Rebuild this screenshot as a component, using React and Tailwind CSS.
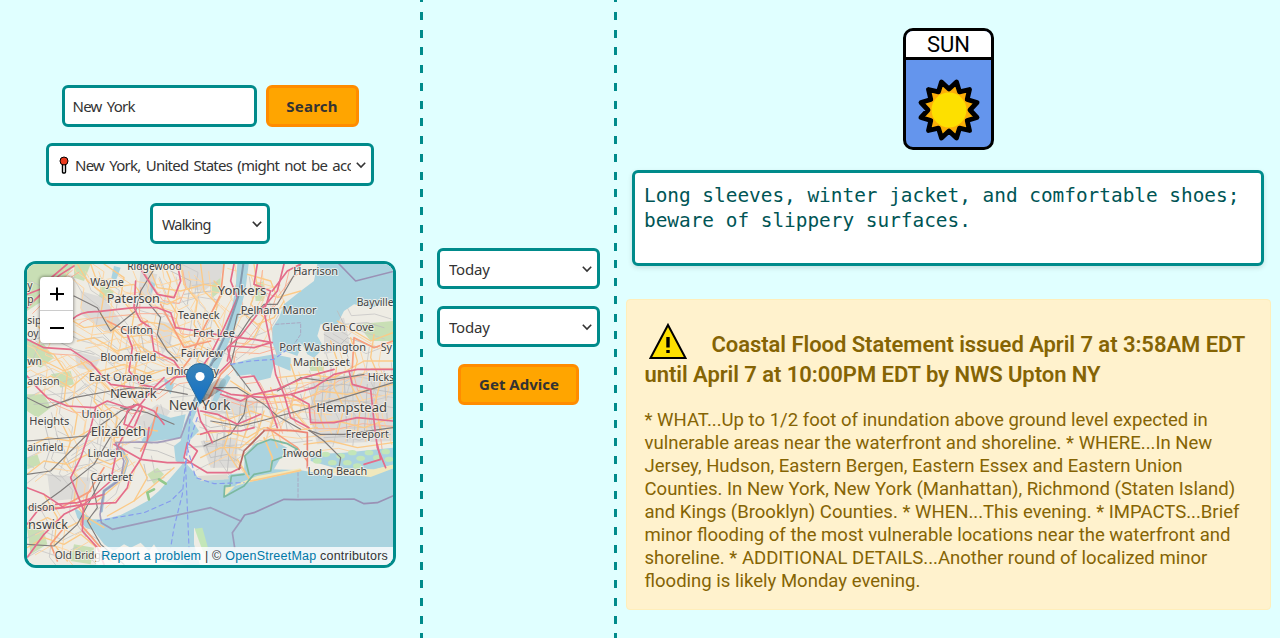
import React, { useState } from 'react';
import { clsx } from 'clsx';

const minorRoads = [
  'M9 320 L60 300 L120 330 L190 300 L230 330 L300 310 L380 340 L440 320 L520 350',
  'M9 380 L80 345 L140 380 L200 330 L260 390 L330 350 L390 330',
  'M160 9 L190 60 L240 100 L230 160 L270 200 L260 260 L310 300 L300 380 L340 430',
  'M200 9 L215 50 L260 80 L330 70 L360 110 L430 130 L470 110',
  'M240 9 L300 50 L290 110 L330 160 L320 220 L350 270 L330 330 L360 400',
  'M9 170 L60 210 L40 260 L90 280 L130 340 L120 420 L160 460 L150 520',
  'M130 170 L180 200 L250 190 L300 230 L370 220 L430 260 L500 240 L560 270',
  'M160 240 L210 230 L280 270 L340 250 L400 290 L470 290',
  'M170 300 L220 360 L210 420 L250 470 L240 540',
  'M420 9 L440 60 L430 110 L460 160 L450 210 L490 270',
  'M470 9 L480 70 L520 120 L510 190 L540 240 L520 300 L560 330',
  'M530 9 L540 90 L580 130 L570 180',
  'M570 60 L600 90 L560 160 L590 210',
  'M380 30 L400 80 L470 90 L540 70 L600 80',
  'M350 180 L420 190 L480 230 L560 200',
  'M670 40 L740 60 L760 110 L830 90',
  'M690 9 L700 80 L680 130 L720 170 L690 230 L650 260',
  'M650 150 L700 190 L750 170 L780 120',
  'M9 560 L70 530 L140 540 L210 500 L280 530 L340 500 L400 510',
  'M9 640 L60 600 L130 610 L190 580 L260 610 L310 580',
  'M110 480 L140 540 L120 600 L160 650 L150 720 L200 790',
  'M240 430 L280 470 L270 540 L310 600 L290 660 L220 720',
  'M9 800 L70 770 L130 800 L190 770 L240 800',
  'M9 860 L60 830 L120 850 L170 820 L220 860 L260 900',
  'M60 700 L100 770 L90 850 L130 900',
  'M540 460 L600 480 L680 450 L740 470 L810 430 L900 440',
  'M520 520 L600 510 L670 530 L720 500 L800 510 L880 500',
  'M530 590 L590 560 L650 560 L700 520 L720 450',
  'M600 420 L620 500 L600 560 L640 620',
  'M660 400 L680 470 L660 530',
  'M740 380 L760 440 L740 500 L760 560',
  'M620 360 L680 400 L750 400 L830 420 L890 390 L970 400 L1107 370',
  'M800 310 L820 370 L800 440 L850 500',
  'M870 290 L890 350 L870 420 L900 500',
  'M920 240 L940 300 L930 380 L960 440 L940 520',
  'M980 230 L1000 300 L980 370 L1010 430 L1000 520',
  'M1050 220 L1040 290 L1070 360 L1050 440 L1080 530',
  'M760 350 L850 340 L930 350 L1020 300 L1107 300',
  'M860 490 L940 480 L1020 500 L1107 470',
  'M840 550 L920 540 L1000 560 L1107 545',
  'M940 180 L990 210 L1040 240 L1107 215',
];

const greyRoads = [
  'M9 240 L70 225 L150 265 L210 280',
  'M30 430 L130 420 L180 395 L240 430 L330 440',
  'M60 480 L80 560 L60 620 L110 660',
  'M120 610 L180 570 L210 610 L280 590',
  'M330 560 L400 570 L450 590',
  'M360 610 L370 660 L420 650',
  'M520 480 L560 500 L620 490',
  'M540 540 L560 590 L610 580 L640 600',
  'M580 520 L570 620',
  'M620 530 L610 630',
  'M650 430 L640 520',
  'M700 420 L690 500',
  'M780 450 L790 510',
  'M830 400 L850 470',
  'M900 340 L890 480',
  'M960 340 L970 540',
  'M1030 370 L1020 530',
  'M1080 330 L1090 480',
  'M860 380 L960 370 L1107 395',
  'M870 420 L1000 420 L1107 440',
  'M900 530 L1100 520',
  'M440 30 L500 60 L490 130',
  'M350 210 L360 270 L420 300',
  'M480 100 L560 90',
  'M940 150 L960 190 L1030 185 L1080 200',
  'M900 220 L950 250 L970 230 L1060 260',
];

const mainRoads = [
  'M9 100 L60 80 L110 40 L150 15',
  'M9 140 L50 100 L70 60 L130 9',
  'M145 175 Q170 150 220 152 L330 140 L400 140 L440 155 L455 200',
  'M340 9 L400 100 L450 110 L470 60 L460 9',
  'M335 60 L330 140 L350 180 L380 200 L390 270 L450 300 L470 330',
  'M9 235 L60 260 L140 265 L200 305 L230 340 L260 370 L330 380',
  'M310 220 L325 260 L315 330 L350 370 L390 380 L420 350',
  'M9 345 L40 380 L70 410 L130 435 L210 440 L250 420 L310 440 L345 430',
  'M455 200 L520 210 L600 225 L690 235 L745 245',
  'M630 9 L620 60 L640 110 L600 200 L560 280 L520 340 L450 350 L380 400',
  'M580 340 L620 300 L610 260 L650 225 L700 160 L760 90 L780 9',
  'M700 9 L690 70 L740 90 L720 150 L730 200 L740 250',
  'M745 90 L790 30 L830 9',
  'M740 245 L690 260 L620 255 L610 300',
  'M740 250 L755 340 L780 400 L800 470 L855 500',
  'M650 350 L690 345 L720 400 L750 470 L760 500',
  'M570 380 L620 400 L720 410 L800 400 L870 380 L930 340 L1000 325 L1107 325',
  'M590 400 L650 420 L690 400 L760 385 L840 350 L930 325',
  'M975 330 L985 370 L1040 385 L1050 480 L1060 560 L1085 620',
  'M800 400 L855 430 L860 485 L930 485 L1000 470 L1107 480',
  'M520 440 L530 480 L555 520 L565 545',
  'M530 450 L580 460 L640 490 L710 460',
  'M340 430 L310 450 L300 490 L330 500 L355 440 L340 430 L390 450 L420 490',
  'M390 380 L350 430 L310 500 L280 560 L260 660 L175 735',
  'M215 440 L200 500 L170 590 L140 650 L160 700 L178 745',
  'M270 550 L350 595 L370 540 L375 500',
  'M350 595 L430 605 L500 605 L550 635 L620 635 L650 620',
  'M350 595 L320 640 L310 680 L275 725 L180 730 L120 740 L60 700 L9 680',
  'M9 890 L60 820 L120 760 L180 730',
  'M178 745 L175 810 L220 860 L240 910',
  'M95 730 L160 725 L240 700',
  'M490 545 L480 590 L500 605 L520 570 L490 545',
  'M690 500 L650 510 L560 510 L530 520',
  'M1020 610 L1070 595 L1060 550',
  'M120 740 L40 750 L9 790',
];

const darkRoads = [
  'M400 9 L350 90 L335 150 L260 210 L220 140 L150 105',
  'M360 110 L410 170 L400 220 L430 270 L460 300',
  'M9 410 L70 440 L150 410 L260 390 L330 380 L410 385 L490 400',
  'M9 640 L80 630 L190 520 L290 450 L340 430',
  'M9 540 L190 525',
  'M290 440 L370 455 L450 490',
  'M330 430 L270 510 L210 610 L110 690 L40 740',
  'M205 660 L220 740 L190 780 L230 850 L300 910',
  'M9 850 L90 855 L160 790 L240 640',
  'M830 9 L800 60 L760 130 L720 130 L680 170 L640 230 L620 310 L680 390',
  'M570 380 L640 380 L720 430 L760 465 L830 505',
  'M560 480 L650 495 L710 480 L860 440 L1107 365',
  'M855 508 L890 520 L960 520 L1107 500',
  'M855 508 L900 540 L950 590 L945 620',
  'M670 400 L660 460 L620 520 L540 555',
  'M700 160 L640 160 L620 250 L560 310',
  'M760 390 L830 350 L900 360 L1020 340',
];

const labels = [
  ['Ridgewood', 391, 26, 31],
  ['Wayne', 249, 75, 32],
  ['Paterson', 328, 126, 38],
  ['Teaneck', 524, 173, 33],
  ['Clifton', 338, 218, 32],
  ['Fort Lee', 570, 229, 33],
  ['Yonkers', 654, 103, 39],
  ['Harrison', 875, 42, 33],
  ['Pelham Manor', 764, 159, 33],
  ['Glen Cove', 972, 209, 33],
  ['Port Washington', 896, 269, 33],
  ['Manhasset', 892, 315, 33],
  ['Bloomfield', 313, 299, 33],
  ['Fairview', 534, 288, 33],
  ['Union City', 505, 341, 33],
  ['East Orange', 289, 361, 33],
  ['Newark', 328, 411, 39],
  ['New York', 527, 448, 42],
  ['Hempstead', 983, 454, 39],
  ['Union', 219, 472, 33],
  ['Heights', 76, 493, 33],
  ['Elizabeth', 283, 525, 39],
  ['Freeport', 1030, 532, 32],
  ['Linden', 243, 588, 33],
  ['Inwood', 835, 588, 33],
  ['Long Beach', 940, 641, 32.5],
  ['Carteret', 262, 659, 33],
  ['Old Bridge', 170, 893, 31],
];

// Labels that start at, or run into, the frame
const edgeLabels = [
  ['Bayville', 998, 136, 31],
  ['Sy', 1070, 269, 32],
  ['Hicks', 1031, 359, 32],
  ['y', 10, 85, 31],
  ['p', 10, 126, 31],
  ['sipp', 10, 188, 31],
  ['oy H', 10, 228, 31],
  ['wn', 10, 312, 31],
  ['adison', 10, 372, 31],
  ['ainfield', 10, 570, 31],
  ['dison', 12, 751, 31],
  ['nswick', 12, 803, 38],
];

const MapTiles = () => (
  <svg viewBox="9 9 1098 903" preserveAspectRatio="none" className="block h-full w-full" fontFamily="'Noto Sans', sans-serif">
    <rect x="0" y="0" width="1120" height="920" fill="#eeece4" />
    {/* Parks and forest */}
    <g fill="#c9dfb5">
      <path d="M9 9 L150 9 L120 60 L70 110 L9 150 Z" />
      <path d="M150 9 L200 9 L180 60 L150 50 Z" />
      <path d="M9 240 L60 250 L90 290 L50 320 L9 300 Z" />
      <path d="M9 400 L60 400 L80 440 L40 470 L9 450 Z" />
      <path d="M80 340 L140 330 L150 370 L110 380 Z" />
      <path d="M230 70 L270 90 L260 120 L225 110 Z" />
      <path d="M560 30 L590 20 L590 90 L565 110 Z" />
      <path d="M850 300 L900 300 L900 330 L860 330 Z" />
      <path d="M1000 190 L1107 180 L1107 240 L1040 240 Z" />
      <path d="M9 800 L60 810 L70 850 L20 880 Z" />
      <path d="M150 850 L210 860 L200 910 L140 900 Z" />
      <path d="M9 590 L40 580 L50 610 L10 625 Z" />
      <path d="M690 70 L720 60 L720 120 L695 120 Z" />
      <path d="M370 640 L400 620 L420 640 L390 670 Z" />
    </g>
    {/* Built-up areas */}
    <g fill="#dcdbd8">
      <path d="M470 9 L600 9 L590 50 L540 90 L480 80 Z" />
      <path d="M410 180 L450 190 L440 250 L415 280 L400 220 Z" />
      <path d="M170 90 L240 110 L290 180 L260 220 L170 160 Z" />
      <path d="M150 270 L230 290 L210 330 L160 320 Z" />
      <path d="M860 350 L1113 340 L1113 540 L880 550 L860 480 Z" />
      <path d="M70 640 L200 650 L190 710 L80 720 Z" />
      <path d="M330 480 L400 430 L440 450 L380 530 Z" />
      <path d="M560 400 L700 420 L690 460 L560 460 Z" />
      <path d="M530 540 L640 530 L640 620 L560 620 Z" />
      <path d="M900 190 L960 170 L980 260 L900 280 Z" />
      <path d="M350 30 L400 40 L380 120 L340 110 Z" />
    </g>
    {/* Local street mesh, covered by the water where it runs off the land */}
    <g fill="none" strokeLinejoin="round">
      <g stroke="#c9c8c6" strokeWidth="2.5">
        {greyRoads.map((d) => <path key={d} d={d} transform="translate(22 -26)" />)}
        {greyRoads.map((d) => <path key={d} d={d} transform="translate(-420 30)" />)}
        {minorRoads.map((d) => <path key={d} d={d} transform="translate(-14 38)" />)}
      </g>
      <g stroke="#fcd5a4" strokeWidth="3">
        {minorRoads.map((d) => <path key={d} d={d} transform="translate(24 22)" />)}
        {minorRoads.slice(0, 18).map((d) => <path key={d} d={d} transform="translate(-60 -18)" />)}
      </g>
      <g stroke="#f9b49a" strokeWidth="3">
        {mainRoads.slice(0, 20).map((d) => <path key={d} d={d} transform="translate(16 18)" />)}
      </g>
    </g>
    {/* Open water */}
    <g fill="#aad3df">
      <path d="M195 775 L240 775 L290 762 L330 742 L370 720 L405 690 L440 650 L475 610 L455 600 L450 555 L470 540 L480 490 L500 440 L530 360 L590 240 L620 160 L635 80 L640 9 L674 9 L664 90 L640 180 L600 280 L560 370 L535 420 L520 445 L505 480 L525 510 L490 545 L480 600 L515 640 L525 655 L600 655 L620 640 L660 635 L662 585 L690 550 L740 535 L790 560 L770 590 L750 625 L830 628 L935 645 L1020 642 L1113 620 L1113 920 L560 920 L545 870 L530 820 L510 800 L510 850 L530 920 L420 900 L390 850 L375 870 L350 845 L320 860 L300 850 L270 870 L240 850 L210 810 Z" />
      <path d="M880 9 L1113 9 L1113 118 L1040 140 L990 130 L960 150 L940 190 L890 190 L880 225 L900 260 L870 290 L850 280 L835 250 L820 285 L780 270 L760 285 L745 245 L745 200 L765 170 L780 130 L830 90 L870 60 Z" />
      <path d="M620 310 L690 290 L750 280 L800 290 L800 330 L750 310 L740 350 L700 360 L680 340 L640 345 Z" />
      <path d="M400 455 L440 470 L485 460 L470 530 L350 545 L375 500 Z" />
      <path d="M860 580 L960 575 L1113 560 L1113 610 L1000 640 L930 620 L860 600 Z" />
      <path d="M270 15 L290 20 L275 60 L262 50 Z" />
      <path d="M380 60 L395 70 L380 100 Z" />
      <path d="M590 360 L610 340 L620 350 L580 420 L565 450 L560 430 Z" />
      <path d="M80 100 L100 110 L100 140 L80 130 Z" />
      <path d="M150 740 L200 770 L215 810 L185 800 L160 770 Z" />
      <path d="M420 350 L450 370 L440 400 L425 380 Z" />
    </g>
    {/* Salt marsh islands */}
    <g fill="#c3e6b8">
      {[[880, 600], [905, 580], [925, 605], [950, 585], [985, 575], [1010, 592], [1035, 575], [1060, 590], [1085, 572], [1095, 595], [1000, 615], [970, 605]].map(([x, y]) => (
        <ellipse key={`${x}-${y}`} cx={x} cy={y} rx="13" ry="8" />
      ))}
      <path d="M512 803 L535 800 L552 860 L540 880 L525 840 Z" />
    </g>
    {/* Barrier beaches */}
    <path d="M600 708 L604 680 L630 676 L690 660 L830 630 L830 622 L700 645 L640 668 Z" fill="#f0e8bd" />
    <path d="M850 628 L940 622 L1050 625 L1113 610 L1113 620 L1040 648 Z" fill="#f0e8bd" />
    <path d="M520 645 L610 640 L615 655 L530 660 Z" fill="#dddcd2" />
    <g fill="none" strokeLinejoin="round" strokeLinecap="round">
      <path d="M290 560 L310 600 L295 650 L240 690 L232 750" stroke="#9fc0d5" strokeWidth="9" />
      <g stroke="#bdbdbd" strokeWidth="2.5">
        {greyRoads.map((d) => <path key={d} d={d} />)}
      </g>
      <g stroke="#fbca88" strokeWidth="4">
        {minorRoads.map((d) => <path key={d} d={d} />)}
        <path d="M250 765 L330 720 L380 680 L450 620" />
        <path d="M345 600 L370 650 L330 720" />
        <path d="M640 595 L680 660 L830 628" strokeWidth="5" />
        <path d="M720 530 L745 590 L740 625" strokeWidth="5" />
      </g>
      <g stroke="#f79e7c" strokeWidth="5">
        <path d="M600 9 L590 100 L540 200 L500 290 L440 370" />
        <path d="M620 310 L590 340 L560 400 L540 440" />
        <path d="M410 130 L480 260 L560 240" />
        <path d="M250 180 L310 210 L370 180" />
        <path d="M400 440 L380 520 L350 570" />
        <path d="M240 620 L190 700 L170 790 L230 860" />
        <path d="M9 740 L110 740 L200 690" />
        <path d="M120 800 L80 850 L100 900" />
        <path d="M730 500 L820 560 L850 600" />
        <path d="M1107 240 L1050 260 L990 230 L985 320" />
      </g>
      <g stroke="#807d7c" strokeWidth="3.5">
        {darkRoads.map((d) => <path key={d} d={d} />)}
      </g>
      <g stroke="#e46d8a" strokeWidth="5">
        {mainRoads.map((d) => <path key={d} d={d} />)}
        <path d="M720 508 L800 508 L850 515 L850 620" stroke="#ec8576" />
      </g>
      <path d="M645 625 L660 570 L720 510" stroke="#b56660" strokeWidth="5" />
      {/* Park boundaries */}
      <path d="M675 640 L662 585 L700 550 L740 535 L790 548 L820 565 L770 590 L745 600 L740 630 L690 640 L660 675 L600 708 L602 675 L618 675 L622 645 L660 640" stroke="#7cb9a0" strokeWidth="5" />
      <path d="M375 715 L370 695 L390 685 M405 655 L425 668" stroke="#92c98c" strokeWidth="8" />
      {/* County and state lines */}
      <g stroke="#9a91b5" strokeWidth="5">
        <path d="M945 9 L995 60 L1113 30" />
        <path d="M500 450 L470 530 L400 545 L350 543 L275 545 L300 600 L290 655 L240 690 L228 760 L232 785 L265 805 L560 740 L650 780 L625 815 L632 860" opacity=".85" />
        <path d="M650 780 L662 762 L690 755 L780 715 L820 716 L990 714 L1020 728 L1060 725 L1113 702" />
      </g>
      <path d="M658 9 L645 100 L605 220 L553 330 L500 440" stroke="#849aae" strokeWidth="6" />
      <path d="M822 635 V710 M755 190 L830 185 L830 220 L810 250" stroke="#a8a8c2" strokeWidth="3" strokeDasharray="10 6" />
      {/* Ferry routes */}
      <g stroke="#869bee" strokeWidth="3.5" strokeDasharray="13 11">
        <path d="M500 450 L485 620 L495 860" />
        <path d="M485 600 L475 700 L450 800 L440 860" />
        <path d="M220 780 L360 755 L440 720 L480 680" />
        <path d="M520 470 L490 560 L515 650 L570 668 L660 665" />
        <path d="M620 310 L680 300 L750 295 L810 250" />
      </g>
    </g>
    <g fill="#444" stroke="#f4f2ec" strokeOpacity=".8" strokeWidth="6" strokeLinejoin="round" paintOrder="stroke">
      {labels.map(([name, x, y, size]) => (
        <text key={name} x={x} y={y} fontSize={size} textAnchor="middle">{name}</text>
      ))}
      {edgeLabels.map(([name, x, y, size]) => (
        <text key={name} x={x} y={y} fontSize={size}>{name}</text>
      ))}
    </g>
  </svg>
);

const Marker = () => (
  <svg viewBox="0 0 41 41" className="absolute left-[159px] top-[99px] h-[41px] w-[41px]">
    <defs>
      <linearGradient id="pin" x1="0" y1="0" x2="0" y2="1">
        <stop offset="0" stopColor="#3883b7" />
        <stop offset="1" stopColor="#126fc6" />
      </linearGradient>
      <linearGradient id="shade" x1="0" y1="1" x2="1" y2="0">
        <stop offset="0" stopColor="#000" stopOpacity=".5" />
        <stop offset="1" stopColor="#000" stopOpacity=".05" />
      </linearGradient>
    </defs>
    <path d="M14 41 L24 22 Q34 11 40 17 Q41 23 32 29 Z" fill="url(#shade)" />
    <path d="M14 40.5 L2.5 19 Q0.5 16 0.5 13 A13.5 12.5 0 0 1 27.5 13 Q27.5 16 25.5 19 Z" fill="url(#pin)" stroke="#2e6c97" />
    <circle cx="14" cy="13.5" r="4.6" fill="#fff" />
  </svg>
);

const MapView = () => (
  <div className="relative mt-[17px] h-[307px] w-[372px] overflow-hidden rounded-xl border-3 border-[#008b8b]">
    <MapTiles />
    <Marker />
    <div className="absolute left-[13px] top-[13px] flex w-[33px] flex-col rounded-sm bg-white text-black shadow-[0_0_3px_1px_rgba(0,0,0,0.35)]">
      {['M2 9 H16 M9 2.5 V15.5', 'M2 9 H16'].map((d, i) => (
        <button key={d} className={clsx('flex items-center justify-center', i === 0 ? 'h-[34px] border-b border-[#ccc]' : 'h-[32px] pt-px')}>
          <svg viewBox="0 0 18 18" className="h-[18px] w-[18px]" fill="none" stroke="currentColor" strokeWidth="2">
            <path d={d} />
          </svg>
        </button>
      ))}
    </div>
    <div className="absolute bottom-0 right-0 h-[18px] whitespace-nowrap bg-white/80 pl-[5px] pr-[5px] font-['Liberation_Sans',sans-serif] text-[12.5px] leading-[18px] tracking-[0.22px] text-[#333]">
      <a className="text-[#0078a8]">Report a problem</a> | © <a className="text-[#0078a8]">OpenStreetMap</a> contributors
    </div>
  </div>
);

const Select = ({ options, className, icon }) => {
  const [value, setValue] = useState(options[0]);

  return (
    <div className={clsx('flex items-center rounded-md border-3 border-[#008b8b] bg-white pl-[9px]', className)}>
      {icon}
      <select
        value={value}
        onChange={(e) => setValue(e.target.value)}
        className="min-w-0 flex-1 appearance-none overflow-hidden whitespace-nowrap pt-[2px] [word-spacing:2px] outline-none"
      >
        {options.map((option) => <option key={option}>{option}</option>)}
      </select>
      <svg viewBox="0 0 12 12" className="ml-[4px] mr-[4px] h-3 w-3 shrink-0" fill="none" stroke="#333" strokeWidth="1.6">
        <path d="M1.8 3.8 L6 8 L10.2 3.8" />
      </svg>
    </div>
  );
};

const PinIcon = () => (
  <svg viewBox="0 0 10 18" className="ml-px mr-[6px] h-[18px] w-[10px] shrink-0">
    <rect x="3.5" y="8" width="3" height="9" rx="1" fill="#fff" stroke="#000" strokeWidth="1.4" />
    <circle cx="5" cy="5" r="4" fill="#ea3a1e" stroke="#000" strokeWidth="1" />
  </svg>
);

const Button = ({ className, children }) => (
  <button className={clsx('rounded-md border-3 border-[#ff8c00] bg-[#ffa500] font-bold', className)}>
    {children}
  </button>
);

const Divider = () => (
  <div className="w-[3px] shrink-0 bg-[repeating-linear-gradient(to_bottom,#008b8b_0,#008b8b_2.04px,transparent_2.04px,transparent_11.8px,#008b8b_11.8px,#008b8b_17.76px)]" />
);

const sunPoints = Array.from({ length: 24 }, (_, i) => {
  const radius = i % 2 === 0 ? 29 : 21;
  const angle = ((i * 15 + 15) * Math.PI) / 180;
  return `${(32 + radius * Math.cos(angle)).toFixed(2)},${(32 + radius * Math.sin(angle)).toFixed(2)}`;
}).join(' ');

const DayCard = () => (
  <div className="flex h-[122px] w-[91px] flex-col overflow-hidden rounded-[10px] border-3 border-black bg-[#6495ed]">
    <div className="h-[29px] border-b-3 border-black bg-white text-center text-[22px] leading-[27px] text-black">SUN</div>
    <svg viewBox="0 0 64 64" className="mx-auto mt-[18px] h-16 w-16 shrink-0">
      <polygon points={sunPoints} fill="#fcaf09" stroke="#000" strokeWidth="4.8" strokeLinejoin="round" />
      <circle cx="32" cy="32" r="17.5" fill="#fde000" />
    </svg>
  </div>
);

const WeatherAlert = () => (
  <div className="mt-[33px] h-[311px] w-[645px] rounded border border-[#ffeeba] bg-[#fff2cd] pl-[17.5px] pr-[17px] pt-[22px] text-[#856404]">
    <h2 className="text-[22px] font-semibold leading-[29px] tracking-[-0.05px]">
      <svg viewBox="0 0 40 38" className="ml-[3px] mr-[24px] inline h-[38px] w-[40px] align-[-8px]">
        <path d="M20 3 L37.5 36 H2.5 Z" fill="#fde000" stroke="#000" strokeWidth="2" />
        <path d="M20 15 V25.5 M20 28 V31" stroke="#000" strokeWidth="3.4" />
      </svg>
      Coastal Flood Statement issued April 7 at 3:58AM EDT until April 7 at 10:00PM EDT by NWS Upton NY
    </h2>
    <p className="mt-5 text-[18.55px] leading-[23px]">
      * WHAT...Up to 1/2 foot of inundation above ground level expected in vulnerable areas near the waterfront and
      shoreline. * WHERE...In New Jersey, Hudson, Eastern Bergen, Eastern Essex and Eastern Union Counties. In New York,
      New York (Manhattan), Richmond (Staten Island) and Kings (Brooklyn) Counties. * WHEN...This evening. *
      IMPACTS...Brief minor flooding of the most vulnerable locations near the waterfront and shoreline. * ADDITIONAL
      DETAILS...Another round of localized minor flooding is likely Monday evening.
    </p>
  </div>
);

const App = () => {
  const [query, setQuery] = useState('New York');

  return (
    <div className="flex h-screen overflow-hidden bg-[#e0ffff] font-['Noto_Sans',sans-serif] text-[15px] text-[#333]">
      {/* Location */}
      <section className="flex w-[420px] shrink-0 flex-col items-center pt-[85px]">
        <div className="flex gap-[9px]">
          <input
            value={query}
            onChange={(e) => setQuery(e.target.value)}
            className="h-[42px] w-[195px] rounded-md border-3 border-[#008b8b] bg-white px-2 tracking-[-0.75px] [word-spacing:2px] outline-none"
          />
          <Button className="h-[42px] w-[93px] tracking-[0.25px]">Search</Button>
        </div>
        <Select
          className="mt-4 h-[43px] w-[328px] tracking-[-0.75px]"
          icon={<PinIcon />}
          options={['New York, United States (might not be accurate)']}
        />
        <Select className="mt-[17px] h-[41px] w-[120px] text-[14.5px] tracking-[-0.85px]" options={['Walking', 'Cycling', 'Driving']} />
        <MapView />
      </section>

      <Divider />

      {/* Dates */}
      <section className="flex w-[191px] shrink-0 flex-col items-center gap-[17px] pt-[248px]">
        <Select className="h-[41px] w-[163px] tracking-[-0.2px]" options={['Today', 'Tomorrow']} />
        <Select className="h-[41px] w-[163px] tracking-[-0.2px]" options={['Today', 'Tomorrow']} />
        <Button className="h-[41px] w-[121px] pl-px">Get Advice</Button>
      </section>

      <Divider />

      {/* Advice */}
      <section className="flex flex-1 flex-col items-center pt-7 font-['Roboto',sans-serif]">
        <DayCard />
        <textarea
          readOnly
          value="Long sleeves, winter jacket, and comfortable shoes; beware of slippery surfaces."
          className="mr-px mt-5 h-[96px] w-[632px] shrink-0 resize-none rounded-md border-3 border-[#008b8b] bg-white py-[10px] pl-[9px] pr-[8px] font-['DejaVu_Sans_Mono',monospace] text-[19.4px] leading-[25px] text-[#055] shadow-[0_2px_5px_rgba(0,0,0,0.12)] outline-none"
        />
        <WeatherAlert />
      </section>
    </div>
  );
};

export default App;
